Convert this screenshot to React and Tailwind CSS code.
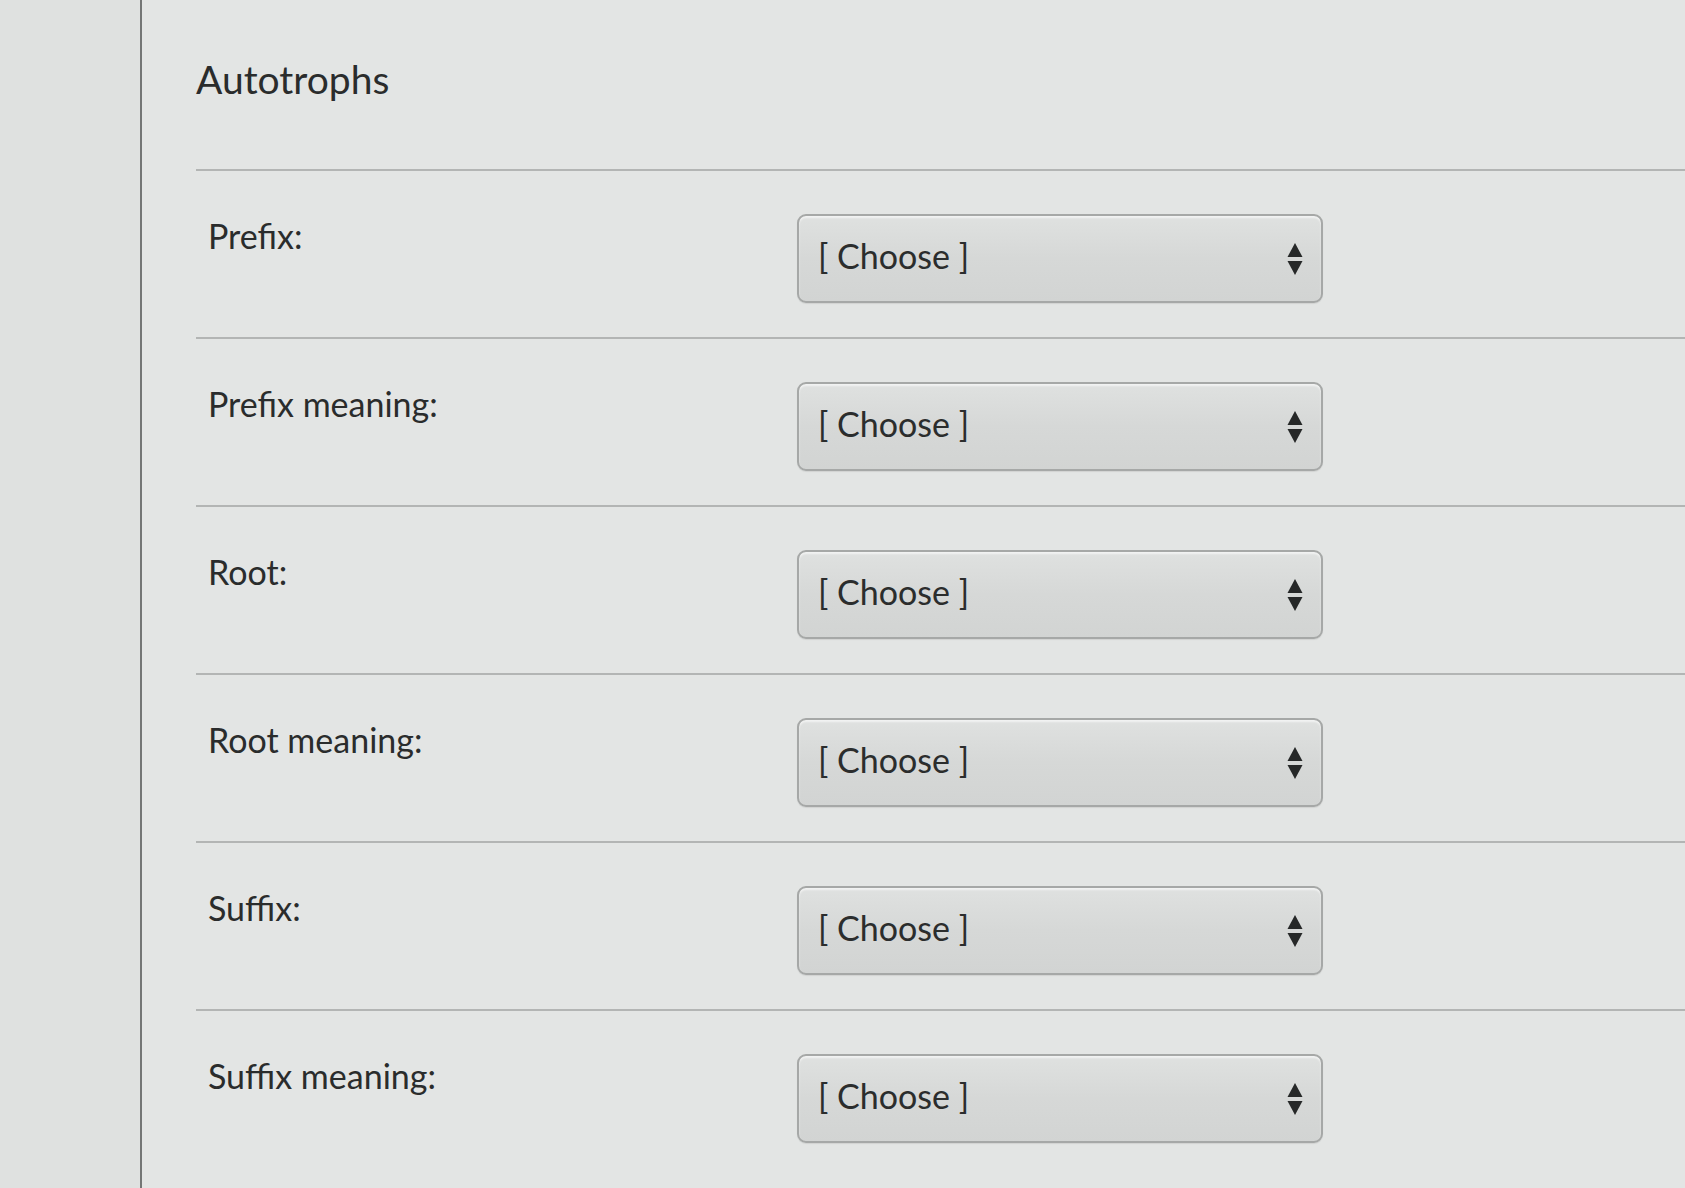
import React from 'react';

const rows = ['Prefix:', 'Prefix meaning:', 'Root:', 'Root meaning:', 'Suffix:', 'Suffix meaning:'];

const Arrows = () => (
  <svg width="16" height="34" viewBox="0 0 16 34" className="shrink-0">
    <path d="M8 1 L15.5 15 L0.5 15 Z" fill="#262828" />
    <path d="M0.5 19 L15.5 19 L8 33 Z" fill="#262828" />
  </svg>
);

const Select = () => (
  <div className="w-[526px] h-[89px] rounded-[9px] border-2 border-[#a6a8a7] bg-gradient-to-b from-[#dfe1e0] via-[#d6d8d7] to-[#d2d4d3] shadow-[inset_0_2px_2px_rgba(255,255,255,0.6),0_1px_1px_rgba(0,0,0,0.08)] flex items-center justify-between pl-[19px] pr-[18px]">
    <span className="text-[34px] text-[#2b2d2d] leading-none pb-[5px]">[ Choose ]</span>
    <Arrows />
  </div>
);

export default function App() {
  return (
    <div
      className="w-full h-[1188px] overflow-hidden flex bg-[#e3e5e4]"
      style={{ fontFamily: 'Lato, "Open Sans", "Liberation Sans", sans-serif' }}
    >
      {/* left strip */}
      <div className="w-[142px] shrink-0 bg-[#dfe1e0] border-r-2 border-[#747675]" />

      <div className="flex-1 pl-[54px]">
        <h1 className="pt-[55px] text-[39px] leading-[48px] text-[#2a2c2c] font-normal">Autotrophs</h1>
        <div className="mt-[66px] border-t-2 border-[#b3b5b4]">
          {rows.map((label, i) => (
            <div
              key={label}
              className={`flex items-start pt-[43px] pb-[34px] ${i < rows.length - 1 ? 'border-b-2 border-[#b3b5b4]' : ''}`}
            >
              <div className="w-[601px] shrink-0 pl-[12px] pt-[2px] text-[34px] leading-[40px] text-[#2a2c2c]">
                {label}
              </div>
              <Select />
            </div>
          ))}
        </div>
      </div>
    </div>
  );
}
